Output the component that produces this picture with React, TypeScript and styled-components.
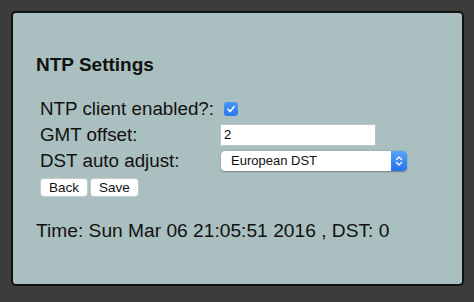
import React from "react";
import styled, { createGlobalStyle } from "styled-components";

const GlobalStyle = createGlobalStyle`
  html, body {
    margin: 0;
    padding: 0;
    background: #3c3c3c;
  }
  body {
    font-family: "Liberation Sans", Arial, sans-serif;
    color: #111;
  }
`;

const Screen = styled.div`
  width: 474px;
  height: 302px;
  padding: 11px 0 0 11px;
  box-sizing: border-box;
`;

const Panel = styled.div`
  width: 453px;
  height: 275px;
  box-sizing: border-box;
  border: 2px solid #121212;
  border-radius: 5px;
  background: #aabfbf;
  padding: 41px 0 0 23px;
  display: flex;
  flex-direction: column;
`;

const Heading = styled.h2`
  margin: 0;
  font-size: 19px;
  font-weight: bold;
  line-height: 21.5px;
`;

const Form = styled.div`
  margin: 20px 0 0 4px;
  display: grid;
  grid-template-columns: 180px auto;
  grid-auto-rows: 26px;
  align-items: center;
  justify-items: start;
`;

const Label = styled.span`
  font-size: 18.8px;
  line-height: 21.5px;
`;

const CheckBox = styled.span`
  margin-left: 4px;
  width: 14px;
  height: 14px;
  border-radius: 3px;
  background: linear-gradient(#4a97f8, #2a77f0);
  display: flex;
  align-items: center;
  justify-content: center;
`;

const TextInput = styled.input`
  width: 156px;
  height: 22px;
  box-sizing: border-box;
  border: 1px solid #b9c4c4;
  background: #fff;
  font-family: "Liberation Sans", Arial, sans-serif;
  font-size: 13px;
  padding: 0 3px;
  outline: none;
`;

const SelectBox = styled.div`
  margin-left: 1px;
  width: 186px;
  height: 20px;
  display: flex;
  background: #fff;
  border-radius: 4px;
  box-shadow: 0 0.5px 1.5px rgba(0, 0, 0, 0.35);
  overflow: hidden;
`;

const Select = styled.select`
  flex: 1;
  appearance: none;
  border: none;
  background: transparent;
  font-family: "Liberation Sans", Arial, sans-serif;
  font-size: 13px;
  color: #111;
  padding: 0 0 0 10px;
  outline: none;
`;

const Stepper = styled.span`
  width: 16px;
  background: linear-gradient(#5aa2fa, #2272ee);
  display: flex;
  align-items: center;
  justify-content: center;
`;

const Buttons = styled.div`
  margin: 4px 0 0 4px;
  display: flex;
  gap: 2px;
`;

const Button = styled.button`
  height: 19px;
  padding: 0 8px;
  border: 1px solid #c4cccc;
  border-radius: 4px;
  background: #fff;
  font-family: "Liberation Sans", Arial, sans-serif;
  font-size: 13.5px;
  color: #111;
  line-height: 17px;
`;

const TimeLine = styled.div`
  margin-top: 23px;
  font-size: 19.2px;
  line-height: 21.5px;
`;

const App = () => {
  return (
    <>
      <GlobalStyle />
      <Screen>
        <Panel>
          <Heading>NTP Settings</Heading>
          <Form>
            <Label>NTP client enabled?:</Label>
            <CheckBox role="checkbox" aria-checked="true">
              <svg width="10" height="10" viewBox="0 0 10 10">
                <path
                  d="M2 5.3 L4.1 7.4 L8.2 2.6"
                  fill="none"
                  stroke="#fff"
                  strokeWidth="1.6"
                  strokeLinecap="round"
                  strokeLinejoin="round"
                />
              </svg>
            </CheckBox>
            <Label>GMT offset:</Label>
            <TextInput defaultValue="2" />
            <Label>DST auto adjust:</Label>
            <SelectBox>
              <Select defaultValue="eu">
                <option value="none">None</option>
                <option value="eu">European DST</option>
                <option value="us">US DST</option>
              </Select>
              <Stepper>
                <svg width="8" height="12" viewBox="0 0 8 12">
                  <path
                    d="M1.5 4.5 L4 2 L6.5 4.5 M1.5 7.5 L4 10 L6.5 7.5"
                    fill="none"
                    stroke="#fff"
                    strokeWidth="1.3"
                    strokeLinecap="round"
                    strokeLinejoin="round"
                  />
                </svg>
              </Stepper>
            </SelectBox>
          </Form>
          <Buttons>
            <Button>Back</Button>
            <Button>Save</Button>
          </Buttons>
          <TimeLine>Time: Sun Mar 06 21:05:51 2016 , DST: 0</TimeLine>
        </Panel>
      </Screen>
    </>
  );
};

export default App;
